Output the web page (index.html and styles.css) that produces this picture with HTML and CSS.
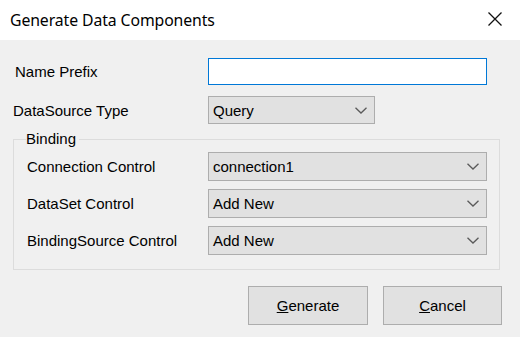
FILE: index.html
```html
<!DOCTYPE html>
<html>
<head>
<meta charset="utf-8">
<link rel="stylesheet" href="styles.css">
</head>
<body>
<div class="window">
  <div class="titlebar">
    <span class="title">Generate Data Components</span>
    <svg class="close" width="14" height="14" viewBox="0 0 14 14"><path d="M0.5 0.5 L13.5 13.5 M13.5 0.5 L0.5 13.5" stroke="#111" stroke-width="1.3" fill="none"/></svg>
  </div>
  <div class="content">
    <div class="row row-name">
      <span class="label label-name">Name Prefix</span>
      <div class="textbox"></div>
    </div>
    <div class="row row-type">
      <span class="label">DataSource Type</span>
      <div class="combo combo-short"><span>Query</span><svg class="chev" width="12" height="7" viewBox="0 0 12 7"><polyline points="0.5,0.8 6,6 11.5,0.8" fill="none" stroke="#5a5a5a" stroke-width="1.3"/></svg></div>
    </div>
    <fieldset class="group">
      <legend>Binding</legend>
      <div class="row grow">
        <span class="label glabel">Connection Control</span>
        <div class="combo combo-long"><span>connection1</span><svg class="chev" width="12" height="7" viewBox="0 0 12 7"><polyline points="0.5,0.8 6,6 11.5,0.8" fill="none" stroke="#5a5a5a" stroke-width="1.3"/></svg></div>
      </div>
      <div class="row grow">
        <span class="label glabel">DataSet Control</span>
        <div class="combo combo-long"><span>Add New</span><svg class="chev" width="12" height="7" viewBox="0 0 12 7"><polyline points="0.5,0.8 6,6 11.5,0.8" fill="none" stroke="#5a5a5a" stroke-width="1.3"/></svg></div>
      </div>
      <div class="row grow">
        <span class="label glabel">BindingSource Control</span>
        <div class="combo combo-long"><span>Add New</span><svg class="chev" width="12" height="7" viewBox="0 0 12 7"><polyline points="0.5,0.8 6,6 11.5,0.8" fill="none" stroke="#5a5a5a" stroke-width="1.3"/></svg></div>
      </div>
    </fieldset>
    <div class="buttons">
      <div class="btn btn-gen"><u>G</u>enerate</div>
      <div class="btn btn-cancel"><u>C</u>ancel</div>
    </div>
  </div>
</div>
</body>
</html>
```
FILE: styles.css
```css
html, body {
  margin: 0;
  padding: 0;
  background: #f0f0f0;
}
.window {
  width: 520px;
  height: 337px;
  display: flex;
  flex-direction: column;
  font-family: "Liberation Sans", Arial, sans-serif;
  font-size: 15px;
  color: #000;
}
.titlebar {
  height: 40px;
  background: #fff;
  display: flex;
  align-items: center;
  justify-content: space-between;
  padding: 0 18px 0 10px;
  box-sizing: border-box;
}
.title {
  font-family: "Noto Sans", "Open Sans", sans-serif;
  font-size: 15.8px;
  letter-spacing: -0.1px;
  margin-top: -1px;
}
.close {
  display: block;
  margin-top: -2px;
}
.content {
  flex: 1;
  background: #f0f0f0;
  padding: 18px 0 0 13px;
  box-sizing: border-box;
}
.row {
  display: flex;
  align-items: center;
}
.label {
  width: 195px;
  flex: none;
}
.label-name {
  width: 193px;
  margin-left: 2px;
}
.row-name {
  height: 27px;
}
.row-type {
  height: 28px;
  margin-top: 11px;
}
.textbox {
  width: 279px;
  height: 27px;
  box-sizing: border-box;
  background: #fff;
  border: 1px solid #0078d7;
}
.combo {
  box-sizing: border-box;
  background: #e1e1e1;
  border: 1px solid #adadad;
  display: flex;
  align-items: center;
  justify-content: space-between;
  padding: 0 7px 0 4px;
}
.combo-short {
  width: 167px;
  height: 28px;
}
.combo-long {
  width: 279px;
  height: 29px;
}
.chev {
  display: block;
}
.group {
  margin: 7px 0 0 0;
  width: 487px;
  box-sizing: border-box;
  border: 1px solid #dcdcdc;
  padding: 5px 0 14px 13px;
  min-width: 0;
}
.group legend {
  margin-left: -1px;
  padding: 0 3px 0 0;
  line-height: 16px;
  height: 16px;
}
.glabel {
  width: 181px;
}
.grow {
  height: 29px;
}
.grow + .grow {
  margin-top: 8px;
}
.buttons {
  display: flex;
  justify-content: flex-end;
  gap: 15px;
  margin-top: 16px;
  padding-right: 18px;
}
.btn {
  height: 39px;
  box-sizing: border-box;
  background: #e1e1e1;
  border: 1px solid #adadad;
  display: flex;
  align-items: center;
  justify-content: center;
}
.btn-gen {
  width: 120px;
}
.btn-cancel {
  width: 119px;
}
```
